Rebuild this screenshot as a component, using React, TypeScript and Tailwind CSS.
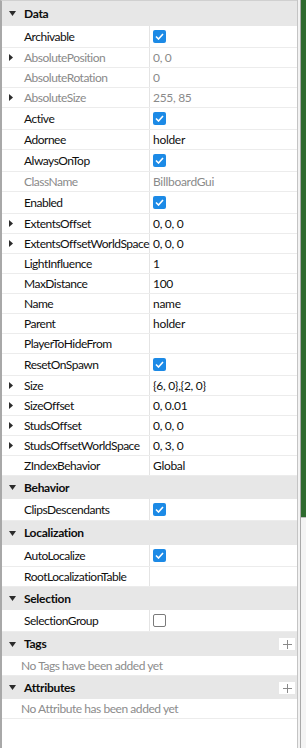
import React from 'react'

type Prop = {
  name: string
  value?: string
  check?: boolean
  arrow?: boolean
  ro?: boolean
  tall?: boolean
}

type Section = {
  title: string
  h: number
  props?: Prop[]
  empty?: string
  plus?: boolean
}

const sections: Section[] = [
  {
    title: 'Data',
    h: 25,
    props: [
      { name: 'Archivable', check: true, tall: true },
      { name: 'AbsolutePosition', value: '0, 0', arrow: true, ro: true },
      { name: 'AbsoluteRotation', value: '0', ro: true },
      { name: 'AbsoluteSize', value: '255, 85', arrow: true, ro: true },
      { name: 'Active', check: true, tall: true },
      { name: 'Adornee', value: 'holder' },
      { name: 'AlwaysOnTop', check: true, tall: true },
      { name: 'ClassName', value: 'BillboardGui', ro: true },
      { name: 'Enabled', check: true, tall: true },
      { name: 'ExtentsOffset', value: '0, 0, 0', arrow: true },
      { name: 'ExtentsOffsetWorldSpace', value: '0, 0, 0', arrow: true },
      { name: 'LightInfluence', value: '1' },
      { name: 'MaxDistance', value: '100' },
      { name: 'Name', value: 'name' },
      { name: 'Parent', value: 'holder' },
      { name: 'PlayerToHideFrom', value: '' },
      { name: 'ResetOnSpawn', check: true, tall: true },
      { name: 'Size', value: '{6, 0},{2, 0}', arrow: true },
      { name: 'SizeOffset', value: '0, 0.01', arrow: true },
      { name: 'StudsOffset', value: '0, 0, 0', arrow: true },
      { name: 'StudsOffsetWorldSpace', value: '0, 3, 0', arrow: true },
      { name: 'ZIndexBehavior', value: 'Global' },
    ],
  },
  { title: 'Behavior', h: 23, props: [{ name: 'ClipsDescendants', check: true, tall: true }] },
  {
    title: 'Localization',
    h: 24,
    props: [
      { name: 'AutoLocalize', check: true, tall: true },
      { name: 'RootLocalizationTable', value: '' },
    ],
  },
  { title: 'Selection', h: 23, props: [{ name: 'SelectionGroup', check: false, tall: true }] },
  { title: 'Tags', h: 24, empty: 'No Tags have been added yet', plus: true },
  { title: 'Attributes', h: 23, empty: 'No Attribute has been added yet', plus: true },
]

function CheckBox({ on }: { on: boolean }) {
  if (!on) {
    return <div className="w-[13px] h-[13px] rounded-[2px] border border-[#7a7a7a] bg-white" />
  }
  return (
    <div className="w-[13px] h-[13px] rounded-[2px] bg-[#1c8ae6] flex items-center justify-center">
      <svg width="9" height="7" viewBox="0 0 9 7">
        <path d="M1 3.5 L3.5 6 L8 1" stroke="white" strokeWidth="1.6" fill="none" />
      </svg>
    </div>
  )
}

function Header({ s }: { s: Section }) {
  return (
    <div className="flex items-center bg-[#e7e7e7] relative" style={{ height: s.h }}>
      <div className="w-[22px] flex pl-[7px]">
        <svg width="7" height="5" viewBox="0 0 7 5">
          <path d="M0 0 H7 L3.5 5 Z" fill="#2b2b2b" />
        </svg>
      </div>
      <span className="font-bold text-[12px] tracking-[-0.3px] text-[#0d0d0d]">{s.title}</span>
      {s.plus && (
        <div className="absolute right-[2px] top-[6px] w-[16px] h-[12px] bg-white flex items-center justify-center">
          <svg width="9" height="9" viewBox="0 0 9 9">
            <path d="M4.5 0 V9 M0 4.5 H9" stroke="#8a8a8a" strokeWidth="1" />
          </svg>
        </div>
      )}
    </div>
  )
}

function PropRow({ p }: { p: Prop }) {
  const color = p.ro ? 'text-[#8a8a8a]' : 'text-[#0f0f0f]'
  return (
    <div className={`flex border-b border-[#ececec] ${p.tall ? 'h-[22px]' : 'h-[20px]'}`}>
      <div className="w-[148px] flex items-center border-r border-[#e4e4e4] shrink-0">
        <div className="w-[22px] flex pl-[7px]">
          {p.arrow && (
            <svg width="4" height="7" viewBox="0 0 4 7">
              <path d="M0 0 L4 3.5 L0 7 Z" fill="#2b2b2b" />
            </svg>
          )}
        </div>
        <span className={`text-[12px] tracking-[-0.5px] whitespace-nowrap ${color}`}>{p.name}</span>
      </div>
      <div className="flex-1 flex items-center pl-[3px]">
        {p.check !== undefined ? (
          <CheckBox on={p.check} />
        ) : (
          <span className={`text-[12px] tracking-[-0.3px] whitespace-nowrap ${color}`}>{p.value}</span>
        )}
      </div>
    </div>
  )
}

export default function App() {
  return (
    <div
      className="w-[306px] h-[748px] flex bg-white overflow-hidden"
      style={{ fontFamily: 'Lato, "Noto Sans", sans-serif' }}
    >
      <div className="w-[297px] h-full border-l-2 border-[#a8a8a8] border-t border-t-[#d0d0d0] flex flex-col">
        {sections.map((s) => (
          <div key={s.title}>
            <Header s={s} />
            {s.props?.map((p) => <PropRow key={p.name} p={p} />)}
            {s.empty && (
              <div className="h-[20px] flex items-center pl-[19px] border-b border-[#ececec]">
                <span className="text-[12px] tracking-[-0.45px] text-[#8c8c8c] whitespace-nowrap">{s.empty}</span>
              </div>
            )}
          </div>
        ))}
      </div>
      <div className="w-[9px] h-full flex">
        <div className="w-[1px] bg-[#c4c4c4]" />
        <div className="w-[2px] bg-[#f2f2f2]" />
        <div className="w-[1px] bg-[#a9a9a9]" />
        <div className="flex-1 flex flex-col">
          <div className="h-[517px] bg-[#2e6a2e]" />
          <div className="flex-1 bg-[#f4f4f4] border-t border-[#bdbdbd]" />
        </div>
      </div>
    </div>
  )
}
